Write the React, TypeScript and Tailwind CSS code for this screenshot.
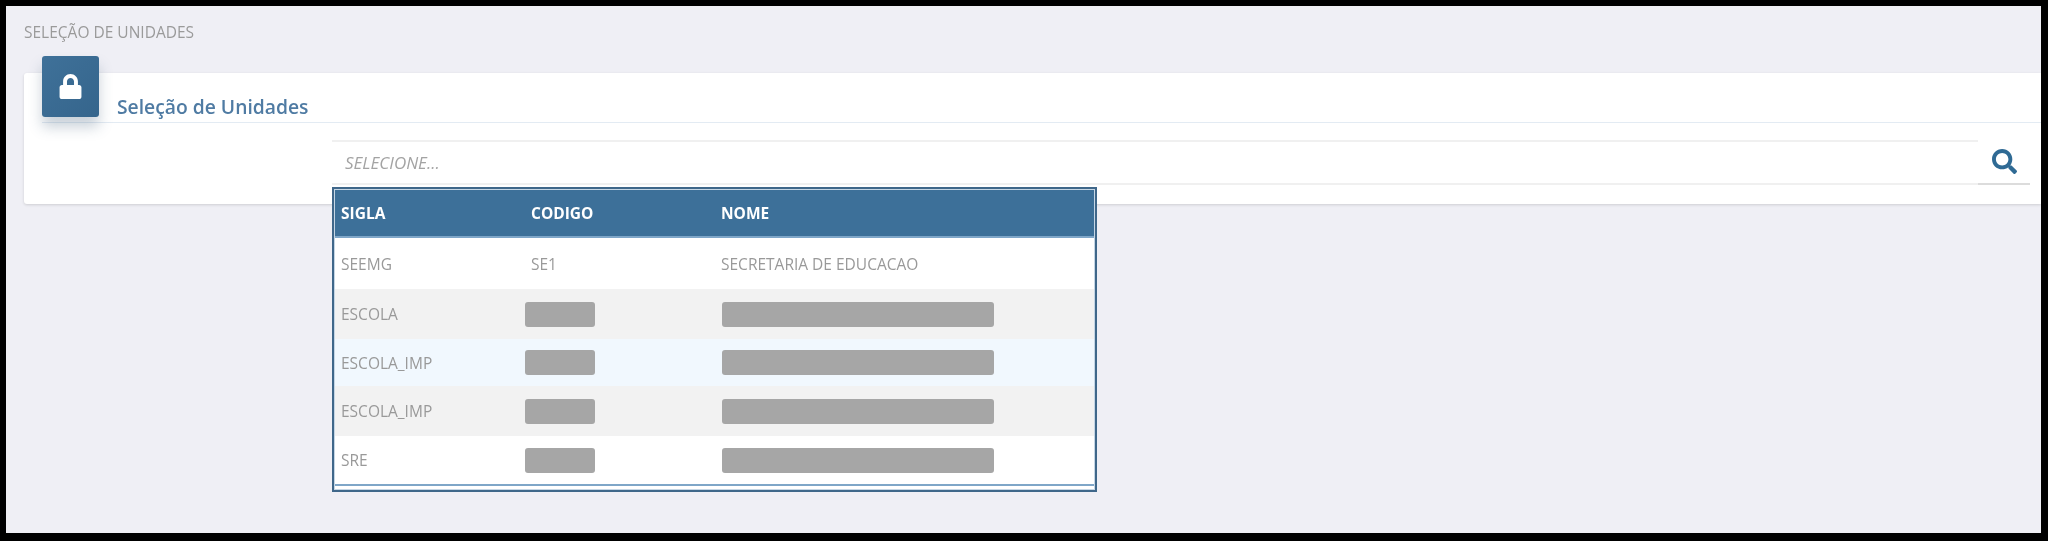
import { FaLock, FaSearch } from 'react-icons/fa'

type Row = {
  sigla: string
  codigo?: string
  nome?: string
  height: string
  bg: string
}

const rows: Row[] = [
  { sigla: 'SEEMG', codigo: 'SE1', nome: 'SECRETARIA DE EDUCACAO', height: 'h-[51px]', bg: 'bg-white' },
  { sigla: 'ESCOLA', height: 'h-[50px]', bg: 'bg-[#f2f2f2]' },
  { sigla: 'ESCOLA_IMP', height: 'h-[47px]', bg: 'bg-[#f1f8fe]' },
  { sigla: 'ESCOLA_IMP', height: 'h-[50px]', bg: 'bg-[#f2f2f2]' },
  { sigla: 'SRE', height: 'h-[48px]', bg: 'bg-white' },
]

export default function App() {
  return (
    <div className="h-[541px] w-[2048px] overflow-hidden border-t-[6px] border-r-[7px] border-b-[8px] border-l-[6px] border-black bg-[#efeff5] font-['Open_Sans',sans-serif] blur-[0.5px]">
      {/* Breadcrumb */}
      <div className="flex h-[67px] items-start pt-[16px] pl-[18px] text-[15.5px] leading-[20px] text-[#9a9a9a]">
        SELEÇÃO DE UNIDADES
      </div>

      {/* Card */}
      <div className="relative ml-[18px] h-[131px] rounded-l-[3px] bg-white shadow-[0_1px_3px_rgba(0,0,0,0.14)]">
        <div className="absolute top-[-17px] left-[18px] flex h-[61px] w-[57px] items-center justify-center rounded-[3px] bg-gradient-to-br from-[#3f7199] to-[#35658c] shadow-[0_10px_14px_rgba(60,90,120,0.28)]">
          <FaLock className="h-[25px] w-[25px] text-white" />
        </div>

        <div className="ml-[18px] flex h-[50px] items-end border-b border-[#e3ebf3] pb-[1px] pl-[75px]">
          <h1 className="text-[19.3px] leading-[28px] font-semibold text-[#4f7ba3]">Seleção de Unidades</h1>
        </div>

        {/* Campo de busca */}
        <div className="relative mt-[17px] mr-[11px] ml-[308px] flex h-[45px]">
          <div className="flex flex-1 items-center border-t-2 border-b-2 border-[#f0f0f0] pl-[13px] text-[17px] text-[#a3a3a3] italic">
            SELECIONE...
          </div>
          <div className="flex w-[52px] items-center justify-center border-b-2 border-[#dcdcdc]">
            <FaSearch className="h-[25px] w-[25px] text-[#2f6a94]" />
          </div>

          {/* Dropdown */}
          <div className="absolute top-[47px] left-0 z-10 w-[765px] border-2 border-[#3f678a] bg-[#c5d6e5] p-px">
            <div className="flex h-[48px] items-center border-b-2 border-[#7fa6c8] bg-[#3d7099] pt-[2px] text-[15.5px] font-bold text-white">
              <div className="w-[190px] pl-[6px]">SIGLA</div>
              <div className="w-[190px] pl-[6px]">CODIGO</div>
              <div className="flex-1 pl-[6px]">NOME</div>
            </div>
            {rows.map((row, i) => (
              <div key={i} className={`flex items-center text-[15.5px] text-[#999999] ${row.height} ${row.bg}`}>
                <div className="w-[190px] pt-[2px] pl-[6px]">{row.sigla}</div>
                <div className="w-[190px]">
                  {row.codigo ? (
                    <span className="relative top-px pl-[6px]">{row.codigo}</span>
                  ) : (
                    <div className="h-[25px] w-[70px] rounded-[3px] bg-[#a6a6a6]" />
                  )}
                </div>
                <div className="flex-1 pl-[6px]">
                  {row.nome ? (
                    <span className="relative top-px">{row.nome}</span>
                  ) : (
                    <div className="ml-px h-[25px] w-[272px] rounded-[3px] bg-[#a6a6a6]" />
                  )}
                </div>
              </div>
            ))}
            <div className="h-[5px] border-t-2 border-[#7fa6c8] bg-white" />
          </div>
        </div>
      </div>
    </div>
  )
}
